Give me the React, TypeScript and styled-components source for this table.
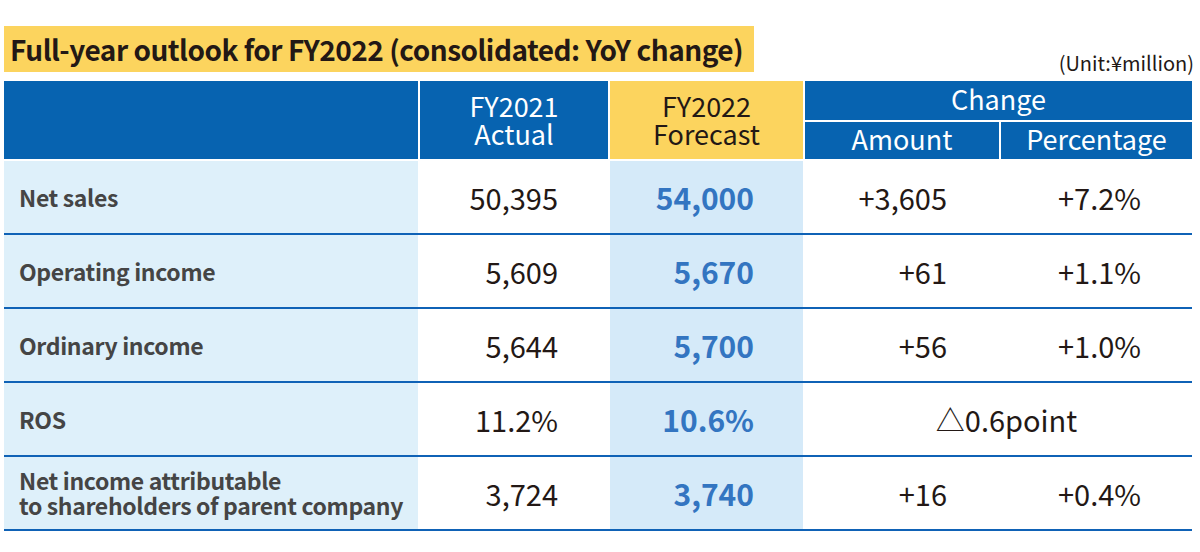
import React from "react";
import styled, { createGlobalStyle } from "styled-components";

const GlobalStyle = createGlobalStyle`
  html, body {
    margin: 0;
    padding: 0;
    background: #ffffff;
  }
  body {
    font-family: "Noto Sans CJK JP", "Noto Sans", sans-serif;
  }
`;

const COLS = "414px 188px 193px 194px 1fr";

const Page = styled.div`
  width: 1188px;
  padding: 26px 8px 0 4px;
`;

const TopBar = styled.div`
  display: flex;
  justify-content: space-between;
  align-items: flex-end;
  margin-bottom: 9px;
`;

const Title = styled.h1`
  margin: 0;
  height: 46px;
  padding: 0 10px 0 6px;
  width: 750px;
  box-sizing: border-box;
  background: #fcd45e;
  color: #231815;
  font-size: 28px;
  font-weight: 700;
  line-height: 46px;
  white-space: nowrap;
  letter-spacing: -0.5px;
`;

const Unit = styled.div`
  flex-shrink: 0;
  white-space: nowrap;
  font-size: 20px;
  line-height: 20px;
  color: #231815;
  margin: 0 -2px -1px 0;
`;

const Head = styled.div`
  display: grid;
  grid-template-columns: ${COLS};
  grid-template-rows: 39px 37px;
  gap: 2px;
  margin-bottom: 2px;
`;

const HeadCell = styled.div<{ $yellow?: boolean; $span?: string; $shift?: number }>`
  display: flex;
  flex-direction: column;
  align-items: center;
  justify-content: center;
  background: ${({ $yellow }) => ($yellow ? "#fcd45e" : "#0763b0")};
  color: ${({ $yellow }) => ($yellow ? "#231815" : "#ffffff")};
  font-size: 27px;
  line-height: 28px;
  padding-bottom: ${({ $shift }) => $shift ?? 0}px;
  ${({ $span }) => $span || ""}
`;

const Row = styled.div`
  display: grid;
  grid-template-columns: ${COLS};
  column-gap: 2px;
  height: 72px;
  border-bottom: 2px solid #0f62b6;
`;

const Label = styled.div`
  display: flex;
  align-items: center;
  padding-left: 15px;
  background: #def0fa;
  color: #454545;
  font-size: 23px;
  font-weight: 700;
  line-height: 25px;
  white-space: nowrap;
  letter-spacing: -0.35px;
`;

const Value = styled.div<{ $forecast?: boolean; $pad?: number }>`
  display: flex;
  align-items: center;
  justify-content: flex-end;
  padding-right: ${({ $pad }) => $pad ?? 50}px;
  background: ${({ $forecast }) => ($forecast ? "#d5eaf9" : "#ffffff")};
  color: ${({ $forecast }) => ($forecast ? "#3375c1" : "#231815")};
  font-weight: ${({ $forecast }) => ($forecast ? 700 : 400)};
  font-size: ${({ $forecast }) => ($forecast ? 30 : 29)}px;
`;

const Wide = styled.div`
  grid-column: span 2;
  display: flex;
  align-items: center;
  justify-content: center;
  padding-left: 16px;
  color: #231815;
  font-size: 29px;
`;

type Line = {
  label: React.ReactNode;
  actual: string;
  forecast: string;
  amount?: string;
  pct?: string;
  point?: string;
};

const rows: Line[] = [
  { label: "Net sales", actual: "50,395", forecast: "54,000", amount: "+3,605", pct: "+7.2%" },
  { label: "Operating income", actual: "5,609", forecast: "5,670", amount: "+61", pct: "+1.1%" },
  { label: "Ordinary income", actual: "5,644", forecast: "5,700", amount: "+56", pct: "+1.0%" },
  { label: "ROS", actual: "11.2%", forecast: "10.6%", point: "△0.6point" },
  {
    label: (
      <span>
        Net income attributable
        <br />
        to shareholders of parent company
      </span>
    ),
    actual: "3,724",
    forecast: "3,740",
    amount: "+16",
    pct: "+0.4%",
  },
];

export default function App() {
  return (
    <Page>
      <GlobalStyle />
      <TopBar>
        <Title>Full-year outlook for FY2022 (consolidated: YoY change)</Title>
        <Unit>(Unit:¥million)</Unit>
      </TopBar>
      <Head>
        <HeadCell $span="grid-row: span 2;" />
        <HeadCell $span="grid-row: span 2;">
          <span>FY2021</span>
          <span>Actual</span>
        </HeadCell>
        <HeadCell $yellow $span="grid-row: span 2;">
          <span>FY2022</span>
          <span>Forecast</span>
        </HeadCell>
        <HeadCell $span="grid-column: span 2;" $shift={3}>
          Change
        </HeadCell>
        <HeadCell $shift={4}>Amount</HeadCell>
        <HeadCell $shift={4}>Percentage</HeadCell>
      </Head>
      {rows.map((r, i) => (
        <Row key={i}>
          <Label>{r.label}</Label>
          <Value>{r.actual}</Value>
          <Value $forecast $pad={49}>
            {r.forecast}
          </Value>
          {r.point ? (
            <Wide>{r.point}</Wide>
          ) : (
            <>
              <Value $pad={52}>{r.amount}</Value>
              <Value $pad={51}>{r.pct}</Value>
            </>
          )}
        </Row>
      ))}
    </Page>
  );
}
